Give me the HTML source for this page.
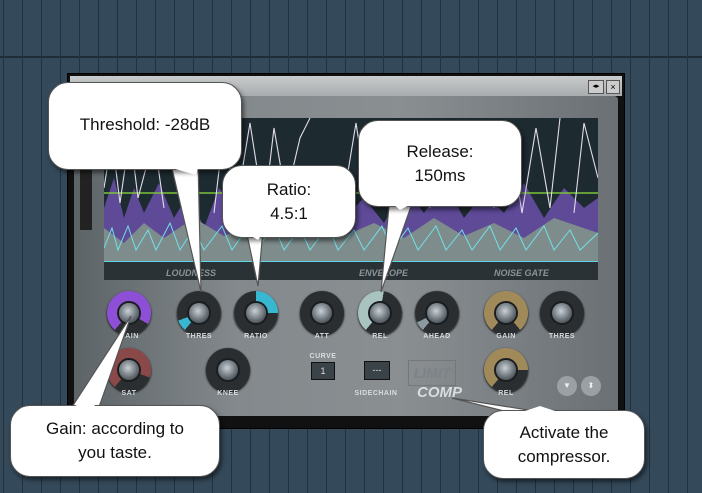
<!DOCTYPE html>
<html><head><style>
body{margin:0;width:702px;height:493px;overflow:hidden;background:#34495a;font-family:"Liberation Sans",Arial,sans-serif;position:relative}
.grid{position:absolute;inset:0;background:
repeating-linear-gradient(90deg,#22313b 0 1px,transparent 1px 19px),
linear-gradient(180deg,transparent 56px,#1f2c35 56px 58px,transparent 58px);background-position:3px 0,0 0}
.win{position:absolute;left:67px;top:73px;width:558px;height:356px;background:#111;border:1px solid #000;box-sizing:border-box}
.title{position:absolute;left:2px;top:2px;right:2px;height:20px;background:linear-gradient(#c9cccd,#a7abad)}
.body{position:absolute;left:6px;top:22px;right:6px;bottom:12px;background:linear-gradient(90deg,#5d6468,#83898c 30%,#8a8f92 60%,#6a7074);border-radius:4px}
.k{position:absolute;width:44px;height:44px;border-radius:50%;background:#2a2e31;box-shadow:0 1px 2px #000}
.k::after{content:"";position:absolute;left:12px;top:12px;width:20px;height:20px;border-radius:50%;background:radial-gradient(circle at 45% 40%,#c9d0d6,#6a7379 55%,#2b3035);box-shadow:0 0 0 2px #1a1d1f}
.l{position:absolute;font-size:7px;color:#d8dcde;font-weight:bold;letter-spacing:.5px;width:60px;text-align:center}
.bub{position:absolute;background:#fff;border:1.5px solid #555;border-radius:20px;box-shadow:2px 3px 4px rgba(0,0,0,.5);font-size:17px;color:#111;text-align:center;display:flex;align-items:center;justify-content:center;line-height:24px}
</style></head><body>
<div class="grid"></div>
<div class="win">
 <div class="title"></div>
 <div style="position:absolute;right:20px;top:6px;width:14px;height:12px;background:#ccc;border:1px solid #555;font-size:7px;text-align:center;line-height:12px">◂▸</div>
 <div style="position:absolute;right:4px;top:6px;width:12px;height:12px;background:#ccc;border:1px solid #555;font-size:9px;text-align:center;line-height:12px">×</div>
 <div class="body"></div>
</div>
<div style="position:absolute;left:80px;top:170px;width:12px;height:60px;background:#222"></div>
<svg style="position:absolute;left:104px;top:118px" width="494" height="162">
<rect width="494" height="162" fill="#1d2a30"/>
<path d="M0 90 L10 60 L20 100 L30 70 L40 95 L55 65 L70 100 L85 75 L100 110 L115 70 L130 90 L145 60 L160 100 L180 70 L200 95 L220 60 L240 100 L260 80 L280 105 L300 70 L320 95 L340 65 L360 100 L380 75 L400 95 L420 65 L440 100 L460 70 L480 90 L494 80 L494 145 L0 145Z" fill="#5f4a98"/>
<path d="M0 110 L20 125 L40 105 L60 120 L90 100 L120 118 L150 105 L180 120 L210 100 L240 118 L270 105 L300 120 L330 100 L360 118 L390 105 L420 120 L450 100 L494 115 L494 145 L0 145Z" fill="#7f8c8c"/>
<path d="M0 130 L8 110 L14 132 L24 108 L32 132 L44 112 L52 132 L66 105 L76 132 L90 110 L100 132 L118 108 L128 132 L142 112 L152 132 L170 108 L180 132 L196 110 L206 132 L224 108 L234 132 L250 112 L260 132 L278 108 L288 132 L304 110 L314 132 L332 108 L342 132 L358 112 L368 132 L386 108 L396 132 L412 110 L422 132 L440 108 L450 132 L466 112 L476 132 L494 115" fill="none" stroke="#6fe0e8" stroke-width="1"/>
<line x1="0" y1="144" x2="494" y2="144" stroke="#5fd8e8" stroke-width="2"/>
<line x1="0" y1="75" x2="494" y2="75" stroke="#7cc23a" stroke-width="1.5"/>
<path d="M0 70 L8 20 L16 85 L26 15 L34 80 L50 20 L60 90 M110 95 L120 10 L132 90 L146 5 L160 95 L170 10 L182 80 L196 20 L206 0 M238 90 L252 5 L262 70 M300 95 L312 10 L326 90 M390 90 L404 5 L418 95 L432 10 L446 90 L456 0 M470 95 L480 5 L494 60" fill="none" stroke="#e0dcea" stroke-width="1.1"/>
<rect y="144" width="494" height="18" fill="#2a3236"/>
<text x="62" y="158" font-size="9" fill="#8a9499" font-style="italic" font-weight="bold" font-family="Liberation Sans">LOUDNESS</text>
<text x="255" y="158" font-size="9" fill="#8a9499" font-style="italic" font-weight="bold" font-family="Liberation Sans">ENVELOPE</text>
<text x="390" y="158" font-size="9" fill="#8a9499" font-style="italic" font-weight="bold" font-family="Liberation Sans">NOISE GATE</text>
</svg>
<div class="k" style="left:107px;top:291px;background:conic-gradient(from 220deg,#8c4fd6 0 260deg,#2a2e31 0)"></div>
<div class="k" style="left:177px;top:291px;background:conic-gradient(from 220deg,#38b8d0 0 30deg,#2a2e31 0)"></div>
<div class="k" style="left:234px;top:291px;background:conic-gradient(from 0deg,#38b8d0 0 90deg,#2a2e31 0)"></div>
<div class="k" style="left:300px;top:291px"></div>
<div class="k" style="left:358px;top:291px;background:conic-gradient(from 220deg,#a9c4c0 0 150deg,#2a2e31 0)"></div>
<div class="k" style="left:415px;top:291px;background:conic-gradient(from 220deg,#8a9aa0 0 25deg,#2a2e31 0)"></div>
<div class="k" style="left:484px;top:291px;background:conic-gradient(from 220deg,#a08a5a 0 280deg,#2a2e31 0)"></div>
<div class="k" style="left:540px;top:291px"></div>
<div class="k" style="left:107px;top:348px;background:conic-gradient(from 220deg,#8a4848 0 250deg,#2a2e31 0)"></div>
<div class="k" style="left:206px;top:348px"></div>
<div class="k" style="left:484px;top:348px;background:conic-gradient(from 220deg,#a08a5a 0 230deg,#2a2e31 0)"></div>
<div class="l" style="left:99px;top:333px">GAIN</div><div class="l" style="left:169px;top:333px">THRES</div><div class="l" style="left:226px;top:333px">RATIO</div><div class="l" style="left:292px;top:333px">ATT</div><div class="l" style="left:350px;top:333px">REL</div><div class="l" style="left:407px;top:333px">AHEAD</div><div class="l" style="left:476px;top:333px">GAIN</div><div class="l" style="left:532px;top:333px">THRES</div>
<div class="l" style="left:99px;top:390px">SAT</div><div class="l" style="left:198px;top:390px">KNEE</div><div class="l" style="left:476px;top:390px">REL</div><div class="l" style="left:293px;top:353px">CURVE</div><div class="l" style="left:346px;top:390px">SIDECHAIN</div>
<div style="position:absolute;left:311px;top:362px;width:22px;height:16px;background:#3a4448;border:1px solid #111;color:#ddd;font-size:9px;text-align:center;line-height:16px">1</div>
<div style="position:absolute;left:364px;top:361px;width:24px;height:17px;background:#3a4448;border:1px solid #111;color:#ddd;font-size:9px;text-align:center;line-height:17px">---</div>
<div style="position:absolute;left:408px;top:360px;width:46px;height:24px;border:1px solid #777;color:#7c8285;font-size:14px;font-style:italic;font-weight:bold;text-align:center;line-height:24px">LIMIT</div>
<div style="position:absolute;left:417px;top:384px;color:#d8dde0;font-size:15px;font-style:italic;font-weight:bold">COMP</div>
<div style="position:absolute;left:557px;top:376px;width:20px;height:20px;border-radius:50%;background:#9aa0a3;color:#eee;font-size:8px;text-align:center;line-height:20px">▼</div>
<div style="position:absolute;left:581px;top:376px;width:20px;height:20px;border-radius:50%;background:#9aa0a3;color:#eee;font-size:8px;text-align:center;line-height:20px">⬍</div>
<svg style="position:absolute;left:0;top:0" width="702" height="493">
<g fill="#fff" stroke="#555" stroke-width="1.2">
<path d="M170 160 L201 292 L198 160Z"/><path d="M246 230 L258 286 L263 230Z"/><path d="M390 195 L381 292 L415 195Z"/>
<path d="M70 410 L131 316 L98 410Z"/><path d="M520 415 L452 398 L560 415Z"/></g></svg>
<div class="bub" style="left:48px;top:82px;width:194px;height:88px;align-items:flex-start;padding-top:30px;box-sizing:border-box">Threshold: -28dB</div>
<div class="bub" style="left:222px;top:165px;width:132px;height:71px">Ratio:<br>4.5:1</div>
<div class="bub" style="left:358px;top:120px;width:162px;height:85px">Release:<br>150ms</div>
<div class="bub" style="left:10px;top:405px;width:208px;height:70px">Gain: according to<br>you taste.</div>
<div class="bub" style="left:483px;top:410px;width:160px;height:67px">Activate the<br>compressor.</div>
<svg style="position:absolute;left:0;top:0" width="702" height="493"><g fill="#fff"><path d="M172 168 L198 168 L196 175Z"/><path d="M248 234 L262 234 L258 240Z"/><path d="M392 203 L413 203 L400 210Z"/><path d="M72 407 L96 407 L90 400Z"/><path d="M522 412 L558 412 L540 406Z"/></g></svg>
</body></html>
